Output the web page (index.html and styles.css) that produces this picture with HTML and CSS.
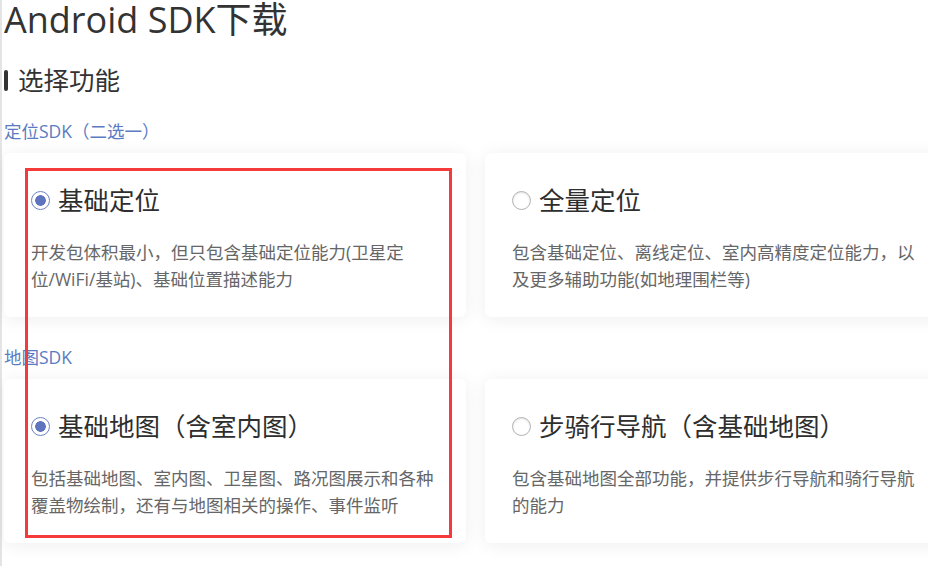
FILE: index.html
```html
<!DOCTYPE html>
<html lang="zh-CN">
<head>
<meta charset="utf-8">
<title>Android SDK下载</title>
<link rel="stylesheet" href="styles.css">
</head>
<body>
<div class="page">
  <h1 class="title">Android SDK下载</h1>
  <h2 class="section"><span class="bar"></span>选择功能</h2>

  <div class="group-label">定位SDK（二选一）</div>
  <div class="cards">
    <div class="card">
      <div class="card-head"><span class="radio checked"></span><span class="card-title">基础定位</span></div>
      <p class="card-desc">开发包体积最小，但只包含基础定位能力(卫星定<span class="nw">位/WiFi/</span>基站)、基础位置描述能力</p>
    </div>
    <div class="card">
      <div class="card-head"><span class="radio"></span><span class="card-title">全量定位</span></div>
      <p class="card-desc">包含基础定位、离线定位、室内高精度定位能力，以及更多辅助功能(如地理围栏等)</p>
    </div>
  </div>

  <div class="group-label group-label-2">地图SDK</div>
  <div class="cards">
    <div class="card">
      <div class="card-head"><span class="radio checked"></span><span class="card-title">基础地图（含室内图）</span></div>
      <p class="card-desc">包括基础地图、室内图、卫星图、路况图展示和各种覆盖物绘制，还有与地图相关的操作、事件监听</p>
    </div>
    <div class="card">
      <div class="card-head"><span class="radio"></span><span class="card-title">步骑行导航（含基础地图）</span></div>
      <p class="card-desc">包含基础地图全部功能，并提供步行导航和骑行导航的能力</p>
    </div>
  </div>

  <div class="highlight"></div>
</div>
</body>
</html>
```

FILE: styles.css
```css
html, body {
  margin: 0;
  padding: 0;
  background: #ffffff;
  overflow: hidden;
}

body {
  font-family: "Open Sans", "Noto Sans CJK SC", sans-serif;
  color: #333333;
}

.page {
  position: relative;
  width: 943px;
  min-height: 566px;
  padding-left: 4px;
  box-shadow: inset 2px 0 0 #e4e4e4;
}

.title {
  margin: 0;
  font-size: 36px;
  line-height: 40px;
  font-weight: 400;
  color: #333333;
}

.section {
  display: flex;
  align-items: center;
  margin: 23px 0 0 0;
  font-size: 25.5px;
  line-height: 34px;
  font-weight: 400;
  color: #333333;
}

.bar {
  width: 4px;
  height: 21px;
  border-radius: 2px;
  background: #333333;
  margin-right: 10px;
}

.group-label {
  margin-top: 22px;
  font-size: 17.5px;
  line-height: 24px;
  color: #5b7bc2;
}

.group-label-2 {
  margin-top: 28px;
}

.cards {
  display: grid;
  grid-template-columns: 462px 462px;
  column-gap: 19px;
  margin-top: 10px;
}

.card {
  background: #ffffff;
  border-radius: 6px;
  box-shadow: 0 2px 18px rgba(0, 0, 0, 0.07);
  padding: 29px 27px 23px 27px;
  height: 164px;
  box-sizing: border-box;
}

.card-head {
  display: flex;
  align-items: center;
  height: 36px;
}

.radio {
  flex: none;
  width: 19px;
  height: 19px;
  border-radius: 50%;
  border: 1.5px solid #b3b3b3;
  box-sizing: border-box;
  box-shadow: inset 0 1px 2px rgba(0, 0, 0, 0.12);
  margin-right: 8px;
  background: #ffffff;
}

.radio.checked {
  border-color: #6f83c6;
  box-shadow: none;
  background: radial-gradient(circle, #5f74bf 0, #5f74bf 5px, #ffffff 5.6px);
}

.card-title {
  font-size: 25.5px;
  line-height: 36px;
  color: #2e2e2e;
}

.card-desc {
  margin: 21px 0 0 0;
  font-size: 17.5px;
  line-height: 27px;
  color: #666666;
}

.nw {
  white-space: nowrap;
}

.highlight {
  position: absolute;
  left: 25px;
  top: 168px;
  width: 427px;
  height: 370px;
  box-sizing: border-box;
  border: 3px solid #f43a3a;
  pointer-events: none;
}
```
